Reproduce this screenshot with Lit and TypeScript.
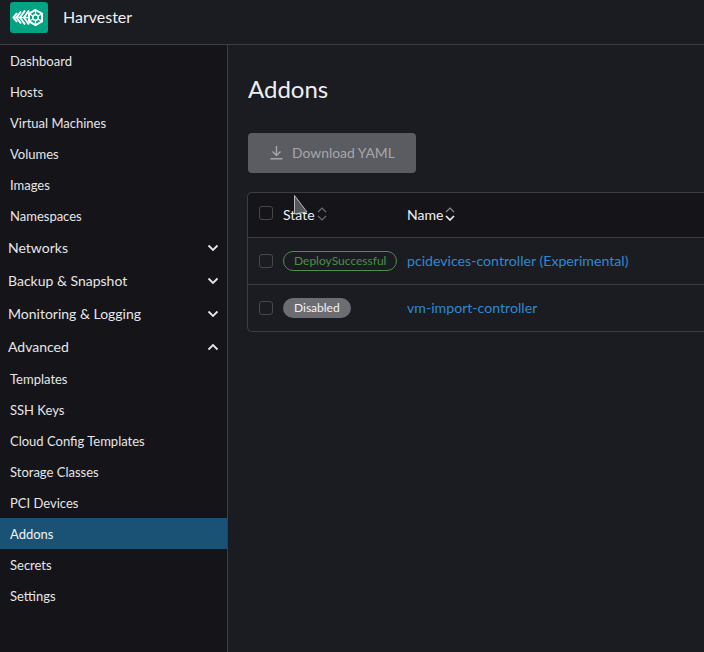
import { LitElement, html, css, svg } from "lit";
import { customElement } from "lit/decorators.js";

type Item = { label: string; kind: "leaf" | "group"; open?: boolean; active?: boolean };

const NAV: Item[] = [
  { label: "Dashboard", kind: "leaf" },
  { label: "Hosts", kind: "leaf" },
  { label: "Virtual Machines", kind: "leaf" },
  { label: "Volumes", kind: "leaf" },
  { label: "Images", kind: "leaf" },
  { label: "Namespaces", kind: "leaf" },
  { label: "Networks", kind: "group" },
  { label: "Backup & Snapshot", kind: "group" },
  { label: "Monitoring & Logging", kind: "group" },
  { label: "Advanced", kind: "group", open: true },
  { label: "Templates", kind: "leaf" },
  { label: "SSH Keys", kind: "leaf" },
  { label: "Cloud Config Templates", kind: "leaf" },
  { label: "Storage Classes", kind: "leaf" },
  { label: "PCI Devices", kind: "leaf" },
  { label: "Addons", kind: "leaf", active: true },
  { label: "Secrets", kind: "leaf" },
  { label: "Settings", kind: "leaf" },
];

const logo = svg`<svg class="logo" viewBox="0 0 38 31" aria-hidden="true">
  <rect width="38" height="31" rx="3" fill="#00a483"/>
  <g fill="none" stroke="#fff" stroke-width="2" stroke-linecap="butt" stroke-linejoin="miter">
    <path d="M7 11 L3.5 15.5 L7 20"/>
    <path d="M11 9.5 L6.5 15.5 L11 21.5"/>
    <path d="M15 8.5 L10 15.5 L15 22.5"/>
    <path d="M19 8.5 L14 15.5 L19 22.5"/>
    <path d="M3.5 15.5 H18" stroke-width="1.4"/>
    <path d="M25.5 8 L32 11.7 V19.3 L25.5 23 L19 19.3 V11.7 Z"/>
    <circle cx="25.5" cy="15.5" r="2.8" stroke-width="1.6"/>
    <path stroke-width="1.3" d="M25.5 8 V12.7 M25.5 18.3 V23 M19 11.7 L23 14 M32 11.7 L28 14 M19 19.3 L23 17 M32 19.3 L28 17"/>
  </g>
</svg>`;

const chevron = (open: boolean) => svg`<svg class="chev" viewBox="0 0 12 8" aria-hidden="true">
  <path d=${open ? "M1.5 6.5 L6 2 L10.5 6.5" : "M1.5 1.5 L6 6 L10.5 1.5"} fill="none" stroke="#e6e6e8" stroke-width="1.8"/>
</svg>`;

const sort = (active: boolean) => svg`<svg class="sort" viewBox="0 0 10 14" aria-hidden="true">
  <path d="M1 5 L5 1 L9 5" fill="none" stroke=${active ? "#8a8b90" : "#6c6d72"} stroke-width="1.2"/>
  <path d="M1 9 L5 13 L9 9" fill="none" stroke=${active ? "#f4f5fa" : "#6c6d72"} stroke-width=${active ? 1.6 : 1.2}/>
</svg>`;

@customElement("app-root")
export class AppRoot extends LitElement {
  static styles = css`
    :host {
      display: block;
      width: 704px;
      height: 652px;
      overflow: hidden;
      background: #1b1c21;
      color: #e6e6e8;
      font-family: Lato, "Liberation Sans", sans-serif;
      font-size: 14px;
    }
    .top {
      height: 45px;
      box-sizing: border-box;
      border-bottom: 1px solid #3d3e43;
      display: flex;
      align-items: flex-start;
      padding-left: 10px;
      gap: 15px;
    }
    .logo { width: 38px; height: 31px; margin-top: 2px; display: block; }
    .brand { font-size: 16px; line-height: 34px; color: #f0f0f3; }
    .body { display: flex; height: 607px; }
    .side {
      width: 228px;
      flex: none;
      box-sizing: border-box;
      background: #141419;
      border-right: 1px solid #3d3e43;
    }
    .leaf {
      height: 31px;
      line-height: 32px;
      padding-left: 10px;
      font-size: 13px;
      color: #e6e6e8;
    }
    .leaf.active { background: #1a5276; color: #f0f2f5; }
    .group {
      height: 33px;
      box-sizing: border-box;
      padding: 0 8px 0;
      display: flex;
      align-items: center;
      justify-content: space-between;
      font-size: 14px;
      color: #e6e6e8;
    }
    .chev { width: 12px; height: 8px; }
    .main { flex: 1; min-width: 0; padding: 29px 0 0 20px; }
    h1 {
      margin: 0;
      font-size: 24px;
      font-weight: 400;
      line-height: 30px;
      color: #eeeef1;
    }
    .btn {
      margin-top: 29px;
      width: 168px;
      height: 40px;
      box-sizing: border-box;
      border-radius: 4px;
      background: #5b5c61;
      color: #a5a6aa;
      font-size: 13.9px;
      display: flex;
      align-items: center;
      padding: 0 0 2px 22px;
      gap: 9px;
    }
    .btn svg { width: 13px; height: 15px; display: block; }
    .table {
      margin: 19px 0 0 -1px;
      width: 480px;
      box-sizing: border-box;
      border: 1px solid #3d3e43;
      border-right: 0;
      border-radius: 5px 0 0 5px;
    }
    .row {
      display: grid;
      grid-template-columns: 35px 124px 1fr;
      align-items: center;
      border-bottom: 1px solid #3d3e43;
      height: 47px;
      box-sizing: border-box;
    }
    .row:last-child { border-bottom: 0; height: 46px; }
    .row.head { height: 45px; background: #141419; border-radius: 5px 0 0 0; }
    .head .cell { display: flex; align-items: center; gap: 2px; color: #f0f0f3; font-size: 14px; margin-top: -2px; }
    .sort { width: 10px; height: 14px; }
    .check {
      width: 12px;
      height: 12px;
      margin-left: 11px;
      border: 1px solid #47484d;
      border-radius: 3px;
      background: #1b1c21;
    }
    .head .check { margin-top: -4px; background: #141419; }
    .badge {
      display: inline-block;
      justify-self: start;
      box-sizing: border-box;
      height: 20px;
      line-height: 18px;
      border-radius: 10px;
      font-size: 12px;
      white-space: nowrap;
    }
    .badge.ok { border: 1px solid #4b8f48; color: #4b8f48; padding: 0 10px; }
    .badge.off { background: #6c6d73; color: #f2f2f4; padding: 0 11px; line-height: 20px; }
    a { color: #3188cf; text-decoration: none; font-size: 14.15px; line-height: 18px; }
    .cursor { position: absolute; left: 294px; top: 195px; width: 14px; height: 24px; pointer-events: none; }
  `;

  render() {
    return html`
      <div class="top">${logo}<span class="brand">Harvester</span></div>
      <div class="body">
        <nav class="side">
          ${NAV.map((n) =>
            n.kind === "leaf"
              ? html`<div class="leaf ${n.active ? "active" : ""}">${n.label}</div>`
              : html`<div class="group"><span>${n.label}</span>${chevron(!!n.open)}</div>`
          )}
        </nav>
        <main class="main">
          <h1>Addons</h1>
          <div class="btn">
            <svg viewBox="0 0 13 15" aria-hidden="true">
              <path d="M6.5 1 V10 M2.5 6.5 L6.5 10.5 L10.5 6.5 M0.5 13.8 H12.5" fill="none" stroke="#a5a6aa" stroke-width="1.4"/>
            </svg>
            <span>Download YAML</span>
          </div>
          <div class="table">
            <div class="row head">
              <div class="check"></div>
              <div class="cell">State${sort(false)}</div>
              <div class="cell">Name${sort(true)}</div>
            </div>
            <div class="row">
              <div class="check"></div>
              <span class="badge ok">DeploySuccessful</span>
              <a href="#">pcidevices-controller (Experimental)</a>
            </div>
            <div class="row">
              <div class="check"></div>
              <span class="badge off">Disabled</span>
              <a href="#">vm-import-controller</a>
            </div>
          </div>
        </main>
      </div>
      <svg class="cursor" viewBox="0 0 14 24" aria-hidden="true">
        <path d="M0.5 0.5 V19 L6 18 L13 17 Z" fill="#55565a" stroke="#d8d8da" stroke-width="0.8"/>
      </svg>
    `;
  }
}
